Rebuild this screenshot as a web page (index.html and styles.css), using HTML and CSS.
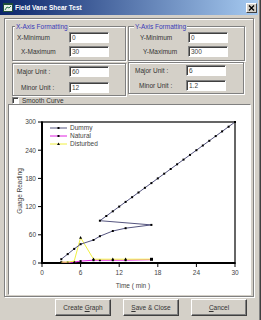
FILE: index.html
```html
<!DOCTYPE html>
<html lang="en">
<head>
    <meta charset="UTF-8">
    <title>Field Vane Shear Test</title>
    <link rel="stylesheet" href="styles.css">
</head>
<body>
    <div class="window">
        <div class="titlebar">
            <svg class="app-icon" viewBox="0 0 10 9">
                <rect x="0" y="0" width="10" height="9" fill="#1f4f3a"/>
                <rect x="1" y="2" width="8" height="6" fill="#e8f0e8"/>
                <path d="M2 7L4 4L6 5L8 3" fill="none" stroke="#2a7a4a" stroke-width="1"/>
            </svg>
            <span class="title">Field Vane Shear Test</span>
            <span class="close">
                <svg viewBox="0 0 7 6"><path d="M1 0.5L6 5.5M6 0.5L1 5.5" stroke="#000" stroke-width="1.3"/></svg>
            </span>
        </div>

        <div class="frame">
            <div class="row row-axes">
                <div class="group group-x">
                    <span class="cap">X-Axis Formatting</span>
                    <div class="field"><span class="lbl">X-Minimum</span><span class="input">0</span></div>
                    <div class="field"><span class="lbl ind">X-Maximum</span><span class="input">30</span></div>
                </div>
                <div class="group group-y">
                    <span class="cap">Y-Axis Formatting</span>
                    <div class="field"><span class="lbl">Y-Minimum</span><span class="input">0</span></div>
                    <div class="field"><span class="lbl ind">Y-Maximum</span><span class="input">300</span></div>
                </div>
            </div>

            <div class="row row-units">
                <div class="group group-ul">
                    <div class="field"><span class="lbl">Major Unit :</span><span class="input">60</span></div>
                    <div class="field"><span class="lbl ind">Minor Unit :</span><span class="input">12</span></div>
                </div>
                <div class="group group-ur">
                    <div class="field"><span class="lbl">Major Unit :</span><span class="input">6</span></div>
                    <div class="field"><span class="lbl ind">Minor Unit :</span><span class="input">1.2</span></div>
                </div>
            </div>

            <div class="check-row">
                <span class="checkbox"></span>
                <span class="check-lbl">Smooth Curve</span>
            </div>

            <div class="chart">
                <svg width="241" height="189" viewBox="9 105 241 189">
                    <defs>
                        <rect id="sq" x="-1" y="-1" width="2" height="2" fill="#000"/>
                        <path id="tri" d="M0 -1.6L1.5 1.1H-1.5Z" fill="#000"/>
                    </defs>

                    <!-- plot area -->
                    <rect x="42" y="122" width="193" height="141" fill="none" stroke="#000" stroke-width="1.2"/>
                    <path d="M42 121.5V263H235.5" fill="none" stroke="#000" stroke-width="2"/>
                    <path d="M38 122H42M38 150.2H42M38 178.4H42M38 206.6H42M38 234.8H42M38 263H42" stroke="#000" stroke-width="1"/>
                    <path d="M42 263V267M80.6 263V267M119.2 263V267M157.8 263V267M196.4 263V267M235 263V267" stroke="#000" stroke-width="1"/>

                    <g class="ax">
                        <text x="36" y="124.3" text-anchor="end">300</text>
                        <text x="36" y="152.5" text-anchor="end">240</text>
                        <text x="36" y="180.7" text-anchor="end">180</text>
                        <text x="36" y="208.9" text-anchor="end">120</text>
                        <text x="36" y="237.1" text-anchor="end">60</text>
                        <text x="36" y="265.3" text-anchor="end">0</text>
                        <text x="42" y="275" text-anchor="middle">0</text>
                        <text x="80.6" y="275" text-anchor="middle">6</text>
                        <text x="119.2" y="275" text-anchor="middle">12</text>
                        <text x="157.8" y="275" text-anchor="middle">18</text>
                        <text x="196.4" y="275" text-anchor="middle">24</text>
                        <text x="235" y="275" text-anchor="middle">30</text>
                        <text x="133" y="288" text-anchor="middle">Time ( min )</text>
                        <text x="0" y="0" text-anchor="middle" transform="translate(22 191) rotate(-90)">Guage Reading</text>
                    </g>

                    <!-- legend -->
                    <path d="M50 128H67" stroke="#55557f"/>
                    <use href="#sq" x="58.5" y="128"/>
                    <path d="M50 136H67" stroke="#e020e0"/>
                    <use href="#sq" x="58.5" y="136"/>
                    <path d="M50 144H67" stroke="#f0f040"/>
                    <use href="#tri" x="58.5" y="144"/>
                    <g class="ax">
                        <text x="70" y="130.3">Dummy</text>
                        <text x="70" y="138.3">Natural</text>
                        <text x="70" y="146.3">Disturbed</text>
                    </g>

                    <!-- Natural -->
                    <polyline fill="none" stroke="#e020e0" points="61.3,262.1 67.7,262.5 74.2,262.1 80.6,261.1 93.5,260.2 99.9,260.2 112.8,260.2 125.6,260.2 151.4,259.7"/>
                    <use href="#sq" x="61.3" y="262.1"/><use href="#sq" x="67.7" y="262.5"/><use href="#sq" x="74.2" y="262.1"/>
                    <use href="#sq" x="80.6" y="261.1"/><use href="#sq" x="93.5" y="260.2"/><use href="#sq" x="99.9" y="260.2"/>
                    <use href="#sq" x="112.8" y="260.2"/><use href="#sq" x="125.6" y="260.2"/>

                    <!-- Disturbed -->
                    <polyline fill="none" stroke="#f0f040" points="61.3,262.1 67.7,262.1 74.2,261.1 80.6,237.6 93.5,259.2 99.9,259.2 112.8,259.2 125.6,259.2 151.4,259.2"/>
                    <use href="#tri" x="80.6" y="237.6"/><use href="#tri" x="93.5" y="259.2"/>
                    <use href="#tri" x="112.8" y="259.2"/><use href="#tri" x="125.6" y="259.2"/>
                    <rect x="150" y="257.8" width="3" height="3" fill="#000"/>

                    <!-- Dummy -->
                    <polyline fill="none" stroke="#55557f" points="61.3,259.2 67.7,254.1 74.2,248.9 80.6,244.2 93.5,240 99.9,236.2 112.8,231 125.6,228.2 151.4,224.9 99.9,220.7 235,122"/>
                    <use href="#sq" x="61.3" y="259.2"/><use href="#sq" x="67.7" y="254.1"/><use href="#sq" x="74.2" y="248.9"/>
                    <use href="#sq" x="80.6" y="244.2"/><use href="#sq" x="93.5" y="240"/><use href="#sq" x="99.9" y="236.2"/>
                    <use href="#sq" x="112.8" y="231"/><use href="#sq" x="125.6" y="228.2"/><use href="#sq" x="151.4" y="224.9"/>
                    <use href="#sq" x="99.9" y="220.7"/><use href="#sq" x="106.3" y="216"/><use href="#sq" x="112.8" y="211.3"/>
                    <use href="#sq" x="119.2" y="206.6"/><use href="#sq" x="125.6" y="201.9"/><use href="#sq" x="132.1" y="197.2"/>
                    <use href="#sq" x="138.5" y="192.5"/><use href="#sq" x="144.9" y="187.8"/><use href="#sq" x="151.4" y="183.1"/>
                    <use href="#sq" x="157.8" y="178.4"/><use href="#sq" x="164.2" y="173.7"/><use href="#sq" x="170.7" y="169"/>
                    <use href="#sq" x="177.1" y="164.3"/><use href="#sq" x="183.5" y="159.6"/><use href="#sq" x="190" y="154.9"/>
                    <use href="#sq" x="196.4" y="150.2"/><use href="#sq" x="202.8" y="145.5"/><use href="#sq" x="209.3" y="140.8"/>
                    <use href="#sq" x="215.7" y="136.1"/><use href="#sq" x="222.1" y="131.4"/><use href="#sq" x="228.6" y="126.7"/>
                    <use href="#sq" x="235" y="122"/>
                </svg>
            </div>
        </div>

        <div class="buttons">
            <button class="btn">Create <u>G</u>raph</button>
            <button class="btn"><u>S</u>ave &amp; Close</button>
            <button class="btn"><u>C</u>ancel</button>
        </div>
    </div>
</body>
</html>
```

FILE: styles.css
```css
*{
    margin: 0;
    padding: 0;
    box-sizing: border-box;
}
body{
    background: #d4d0c8;
    font-family: "Liberation Sans", Arial, sans-serif;
    font-size: 6.5px;
    color: #333;
}
.window{
    width: 261px;
    height: 320px;
    background: #d4d0c8;
    box-shadow: inset -1px 0 #404040, inset -2px 0 #808080;
}
/* title bar */
.titlebar{
    display: flex;
    align-items: center;
    width: 258px;
    height: 15px;
    padding: 0 1px 0 3px;
    background: linear-gradient(to right, #0a246a, #a6caf0);
}
.app-icon{
    width: 10px;
    height: 9px;
    margin-right: 2px;
}
.title{
    color: #fff;
    font-weight: bold;
    font-size: 6.5px;
}
.close{
    display: flex;
    align-items: center;
    justify-content: center;
    width: 11px;
    height: 10px;
    margin-left: auto;
    background: #d4d0c8;
    border: 1px solid;
    border-color: #fff #404040 #404040 #fff;
}
.close svg{
    width: 7px;
    height: 6px;
}
/* main etched frame */
.frame{
    width: 250px;
    height: 279px;
    margin: 3px 0 0 4px;
    border: 1px solid #808080;
    box-shadow: inset 1px 1px #fff, 1px 1px #fff;
}
.row{
    display: flex;
    align-items: flex-start;
    gap: 2px;
    margin-left: 7px;
}
.row-axes{
    margin-top: 7px;
}
.row-units{
    margin-top: 1px;
}
.group{
    border: 1px solid #808080;
    box-shadow: inset 1px 1px #fff, 1px 1px #fff;
}
.group-x{
    width: 114px;
    height: 35px;
}
.group-y{
    width: 117px;
    height: 35px;
}
.group-ul{
    width: 114px;
    height: 33px;
    margin-top: 1px;
}
.group-ur{
    width: 116px;
    height: 32px;
}
.cap{
    display: block;
    width: max-content;
    margin: -4px 0 0 2px;
    padding: 0 1px;
    line-height: 7px;
    color: #3a3ab8;
    background: #d4d0c8;
}
.group-y .cap{
    margin-left: 5px;
}
.field{
    display: flex;
    align-items: center;
    height: 11px;
}
.cap + .field{
    margin-top: 2px;
}
.field + .field{
    margin-top: 3px;
}
.lbl{
    flex: none;
    width: 56px;
    padding-left: 4px;
}
.lbl.ind{
    padding-left: 8px;
}
.group-y .lbl{
    width: 59px;
    padding-left: 11px;
}
.group-y .lbl.ind{
    padding-left: 14px;
}
.group-ul .field:first-child,
.group-ur .field:first-child{
    margin-top: 2px;
}
.group-ul .field + .field{
    margin-top: 5px;
}
.group-ur .field + .field{
    margin-top: 4px;
}
.group-ur .lbl{
    width: 57px;
    padding-left: 6px;
}
.group-ur .lbl.ind{
    padding-left: 10px;
}
.input{
    width: 40px;
    height: 11px;
    padding-left: 2px;
    line-height: 9px;
    background: #fff;
    border: 1px solid;
    border-color: #808080 #fff #fff #808080;
    box-shadow: inset 1px 1px #404040;
    color: #444;
}
/* checkbox */
.check-row{
    display: flex;
    align-items: center;
    height: 7px;
    margin: 1px 0 0 7px;
}
.checkbox{
    width: 7px;
    height: 7px;
    background: #fff;
    border: 1px solid;
    border-color: #808080 #fff #fff #808080;
    box-shadow: inset 1px 1px #404040;
}
.check-lbl{
    margin-left: 3px;
}
/* chart */
.chart{
    width: 243px;
    height: 191px;
    margin-left: 3px;
    background: #fff;
    border: 1px solid;
    border-color: #808080 #fff #fff #808080;
}
.chart svg{
    display: block;
}
.ax text{
    font-family: "Liberation Sans", Arial, sans-serif;
    font-size: 6.5px;
    fill: #444;
}
/* buttons */
.buttons{
    display: flex;
    justify-content: flex-end;
    gap: 12px;
    margin-top: 2px;
    padding-right: 14px;
}
.btn{
    width: 56px;
    height: 17px;
    font: inherit;
    color: #333;
    background: #d4d0c8;
    border: 1px solid;
    border-color: #fff #404040 #404040 #fff;
    box-shadow: inset -1px -1px #808080;
}
```
